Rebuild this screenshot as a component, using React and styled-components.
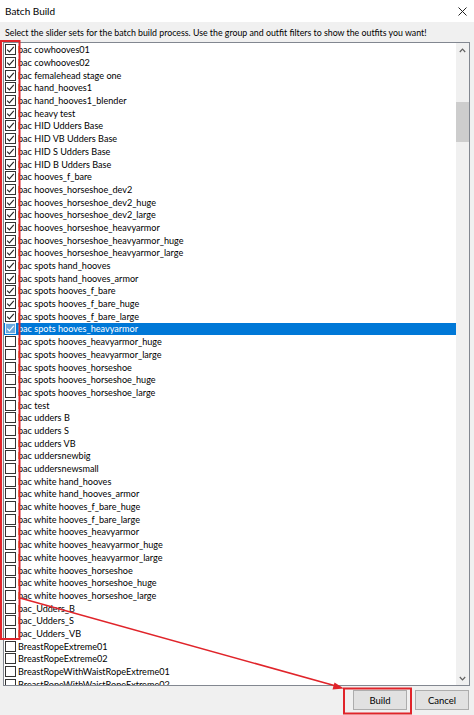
import React from "react";
import styled, { createGlobalStyle } from "styled-components";

const GlobalStyle = createGlobalStyle`
  html, body {
    margin: 0;
    padding: 0;
    background: #f0f0f0;
  }
  body {
    font-family: Lato, "Noto Sans", "Liberation Sans", sans-serif;
    color: #000;
  }
`;

const outfits = [
  "bac cowhooves01",
  "bac cowhooves02",
  "bac femalehead stage one",
  "bac hand_hooves1",
  "bac hand_hooves1_blender",
  "bac heavy test",
  "bac HID Udders Base",
  "bac HID VB Udders Base",
  "bac HID S Udders Base",
  "bac HID B Udders Base",
  "bac hooves_f_bare",
  "bac hooves_horseshoe_dev2",
  "bac hooves_horseshoe_dev2_huge",
  "bac hooves_horseshoe_dev2_large",
  "bac hooves_horseshoe_heavyarmor",
  "bac hooves_horseshoe_heavyarmor_huge",
  "bac hooves_horseshoe_heavyarmor_large",
  "bac spots hand_hooves",
  "bac spots hand_hooves_armor",
  "bac spots hooves_f_bare",
  "bac spots hooves_f_bare_huge",
  "bac spots hooves_f_bare_large",
  "bac spots hooves_heavyarmor",
  "bac spots hooves_heavyarmor_huge",
  "bac spots hooves_heavyarmor_large",
  "bac spots hooves_horseshoe",
  "bac spots hooves_horseshoe_huge",
  "bac spots hooves_horseshoe_large",
  "bac test",
  "bac udders B",
  "bac udders S",
  "bac udders VB",
  "bac uddersnewbig",
  "bac uddersnewsmall",
  "bac white hand_hooves",
  "bac white hand_hooves_armor",
  "bac white hooves_f_bare_huge",
  "bac white hooves_f_bare_large",
  "bac white hooves_heavyarmor",
  "bac white hooves_heavyarmor_huge",
  "bac white hooves_heavyarmor_large",
  "bac white hooves_horseshoe",
  "bac white hooves_horseshoe_huge",
  "bac white hooves_horseshoe_large",
  "bac_Udders_B",
  "bac_Udders_S",
  "bac_Udders_VB",
  "BreastRopeExtreme01",
  "BreastRopeExtreme02",
  "BreastRopeWithWaistRopeExtreme01",
  "BreastRopeWithWaistRopeExtreme02",
];

const CHECKED_UNTIL = 23;
const SELECTED = 22;

const Window = styled.div`
  position: relative;
  width: 474px;
  height: 715px;
  background: #f0f0f0;
  display: flex;
  flex-direction: column;
  overflow: hidden;
`;

const TitleBar = styled.div`
  height: 22px;
  flex: none;
  background: #fff;
  display: flex;
  align-items: center;
  justify-content: space-between;
  padding: 0 7px 0 5px;
  font-size: 10px;
`;

const Content = styled.div`
  flex: none;
  display: flex;
  flex-direction: column;
  padding: 0 4px 0 3px;
`;

const Instruction = styled.div`
  height: 20px;
  flex: none;
  display: flex;
  align-items: center;
  padding-left: 2px;
  font-size: 8.8px;
  white-space: nowrap;
`;

const ListBox = styled.div`
  height: 644px;
  flex: none;
  box-sizing: border-box;
  border: 1px solid #828790;
  background: #fff;
  display: flex;
  overflow: hidden;
`;

const Rows = styled.div`
  flex: 1;
  padding-top: 0.5px;
  overflow: hidden;
`;

const Row = styled.div`
  height: 12.7px;
  display: flex;
  align-items: center;
  gap: 2px;
  padding-left: 1px;
  font-size: 9.1px;
  white-space: nowrap;
  background: ${(p) => (p.$selected ? "#0078d7" : "transparent")};
  color: ${(p) => (p.$selected ? "#fff" : "#000")};
`;

const Box = styled.span`
  width: 11px;
  height: 11px;
  flex: none;
  box-sizing: border-box;
  border: 1px solid ${(p) => (p.$selected ? "#e6f0fa" : "#333")};
  background: ${(p) => (p.$selected ? "#6aa8e0" : "#fff")};
  display: flex;
  align-items: center;
  justify-content: center;
`;

const Scrollbar = styled.div`
  width: 13px;
  flex: none;
  background: #f0f0f0;
  display: flex;
  flex-direction: column;
  align-items: center;
`;

const ArrowCell = styled.div`
  height: 14px;
  flex: none;
  display: flex;
  align-items: center;
  justify-content: center;
`;

const Track = styled.div`
  flex: 1;
  width: 100%;
  padding-top: 45px;
`;

const Thumb = styled.div`
  width: 100%;
  height: 40px;
  background: #cdcdcd;
`;

const Footer = styled.div`
  flex: 1;
  display: flex;
  justify-content: flex-end;
  align-items: flex-start;
  gap: 8px;
  padding: 4px 5px 0 0;
`;

const Button = styled.button`
  width: 54px;
  height: 20px;
  box-sizing: border-box;
  border: 1px solid #adadad;
  background: #e1e1e1;
  font-family: Lato, "Noto Sans", "Liberation Sans", sans-serif;
  font-size: 9.5px;
  color: #000;
  padding: 0;
`;

const Overlay = styled.svg`
  position: absolute;
  left: 0;
  top: 0;
  pointer-events: none;
`;

const Check = ({ color }) => (
  <svg width="9" height="9" viewBox="0 0 9 9">
    <polyline
      points="1.2,4.6 3.4,6.9 7.8,1.8"
      fill="none"
      stroke={color}
      strokeWidth="1.1"
    />
  </svg>
);

const Chevron = ({ up }) => (
  <svg width="7" height="5" viewBox="0 0 7 5">
    <polyline
      points={up ? "0.8,4 3.5,1.2 6.2,4" : "0.8,1 3.5,3.8 6.2,1"}
      fill="none"
      stroke="#606060"
      strokeWidth="1.2"
    />
  </svg>
);

const App = () => {
  return (
    <>
      <GlobalStyle />
      <Window>
        <TitleBar>
          <span>Batch Build</span>
          <svg width="9" height="9" viewBox="0 0 9 9">
            <path d="M0.5 0.5 L8.5 8.5 M8.5 0.5 L0.5 8.5" stroke="#222" strokeWidth="1" />
          </svg>
        </TitleBar>
        <Content>
          <Instruction>
            Select the slider sets for the batch build process. Use the group and outfit filters to show the outfits you want!
          </Instruction>
          <ListBox>
            <Rows>
              {outfits.map((name, i) => (
                <Row key={name} $selected={i === SELECTED}>
                  <Box $selected={i === SELECTED}>
                    {i < CHECKED_UNTIL && (
                      <Check color={i === SELECTED ? "#fff" : "#222"} />
                    )}
                  </Box>
                  <span>{name}</span>
                </Row>
              ))}
            </Rows>
            <Scrollbar>
              <ArrowCell>
                <Chevron up />
              </ArrowCell>
              <Track>
                <Thumb />
              </Track>
              <ArrowCell>
                <Chevron />
              </ArrowCell>
            </Scrollbar>
          </ListBox>
        </Content>
        <Footer>
          <Button>Build</Button>
          <Button>Cancel</Button>
        </Footer>
        <Overlay width="474" height="715" viewBox="0 0 474 715">
          <rect x="1" y="41" width="18.5" height="598" fill="none" stroke="#e0242a" strokeWidth="2" />
          <rect x="344" y="688.5" width="67" height="25" fill="none" stroke="#e0242a" strokeWidth="2" />
          <line x1="20" y1="598" x2="336" y2="686" stroke="#e0242a" strokeWidth="1.6" />
          <polygon points="344,688.5 334.5,682.5 332.5,689.5" fill="#e0242a" />
        </Overlay>
      </Window>
    </>
  );
};

export default App;
